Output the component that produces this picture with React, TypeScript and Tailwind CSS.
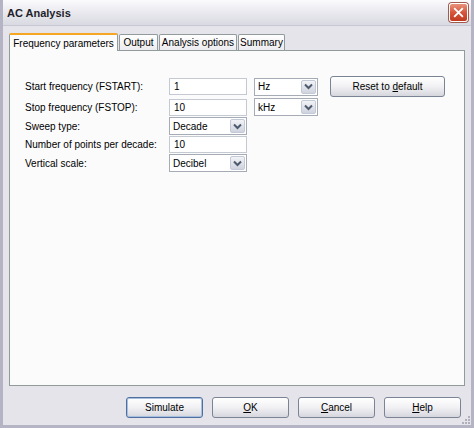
import React from "react";

const font = { fontFamily: 'Tahoma, "Liberation Sans", "DejaVu Sans", sans-serif' };

function Chevron() {
    return (
        <svg width="9" height="7" viewBox="0 0 9 7" aria-hidden="true">
            <path d="M1 1.5 L4.5 5 L8 1.5" fill="none" stroke="#4d5a6e" strokeWidth="2" />
        </svg>
    );
}

function Select({ value, width }: { value: string; width: string }) {
    return (
        <div className={`flex h-[18px] items-stretch border border-[#a5acb5] bg-white ${width}`}>
            <div className="flex flex-1 items-center pl-[3px] text-[10px] text-black">{value}</div>
            <div className="m-px flex w-[15px] items-center justify-center rounded-[2px] border border-[#c3c9d6] bg-gradient-to-b from-[#f2f3f7] to-[#cfd3de]">
                <Chevron />
            </div>
        </div>
    );
}

function Input({ value }: { value: string }) {
    return (
        <div className="flex h-[17px] w-[78px] items-center border border-[#c5cad2] bg-white pl-[4px] text-[10px] text-black">
            {value}
        </div>
    );
}

function Button({ children, focused = false, width = "w-[77px]" }: { children: React.ReactNode; focused?: boolean; width?: string }) {
    return (
        <button
            type="button"
            className={`flex h-[21px] items-center justify-center rounded-[3px] border ${
                focused ? "border-[#4f6f9f] shadow-[inset_0_0_0_1px_#a9bfe0]" : "border-[#7b8494]"
            } bg-gradient-to-b from-white via-[#f1f1f4] to-[#d6d7de] text-[10px] text-black ${width}`}
        >
            {children}
        </button>
    );
}

function Row({ label, children, className = "" }: { label: string; children: React.ReactNode; className?: string }) {
    return (
        <div className={`flex items-center ${className}`}>
            <div className="w-[144px] whitespace-nowrap text-[10px] text-black">{label}</div>
            {children}
        </div>
    );
}

function Tab({ label, width }: { label: string; width: string }) {
    return (
        <div className={`ml-px flex h-[16px] items-center justify-center whitespace-nowrap rounded-t-[2px] border-x border-t border-[#919b9c] bg-gradient-to-b from-white to-[#ececf0] text-[10px] text-black ${width}`}>
            {label}
        </div>
    );
}

export default function App() {
    return (
        <div style={font} className="flex h-[428px] w-[474px] flex-col border-x-[3px] border-b-[3px] border-[#b4b4c4] bg-[#e4e4ea]">
            {/* Title bar */}
            <div className="flex h-[26px] shrink-0 items-center justify-between border-b border-[#c8c8d4] bg-gradient-to-b from-[#fbfbfd] via-[#e9e9ef] to-[#d9d9e1] pl-[4px] pr-[3px]">
                <span className="pt-[2px] text-[11px] font-bold text-[#1f1f2a]">AC Analysis</span>
                <div className="flex h-[19px] w-[19px] items-center justify-center rounded-[3px] border border-white bg-gradient-to-b from-[#e8917c] via-[#d6553c] to-[#c0391f] shadow-[0_0_0_1px_#a05a4e]">
                    <svg width="11" height="11" viewBox="0 0 12 12" aria-hidden="true">
                        <path d="M2 2 L10 10 M10 2 L2 10" stroke="white" strokeWidth="2" strokeLinecap="square" />
                    </svg>
                </div>
            </div>

            {/* Tabs + panel */}
            <div className="flex flex-col px-[6px] pt-[7px]">
                <div className="flex items-end">
                    <div className="relative z-10 -mb-px flex h-[18px] w-[109px] items-center justify-center whitespace-nowrap rounded-t-[2px] border-x border-t-[2px] border-x-[#919b9c] border-t-[#f5a623] bg-[#fbfbfc] text-[10px] text-black">
                        Frequency parameters
                    </div>
                    <Tab label="Output" width="w-[39px]" />
                    <Tab label="Analysis options" width="w-[78px]" />
                    <Tab label="Summary" width="w-[47px]" />
                </div>
                <div className="flex h-[336px] flex-col border border-[#919b9c] bg-[#fbfbfc] pl-[15px] pt-[25px]">
                    <Row label="Start frequency (FSTART):">
                        <Input value="1" />
                        <div className="ml-[7px]">
                            <Select value="Hz" width="w-[64px]" />
                        </div>
                        <div className="ml-[12px]">
                            <Button width="w-[115px]">
                                <span>
                                    Reset to <u>d</u>efault
                                </span>
                            </Button>
                        </div>
                    </Row>
                    <Row label="Stop frequency (FSTOP):" className="mt-px">
                        <Input value="10" />
                        <div className="ml-[7px]">
                            <Select value="kHz" width="w-[64px]" />
                        </div>
                    </Row>
                    <Row label="Sweep type:" className="mt-px">
                        <Select value="Decade" width="w-[78px]" />
                    </Row>
                    <Row label="Number of points per decade:" className="mt-px">
                        <Input value="10" />
                    </Row>
                    <Row label="Vertical scale:" className="mt-px">
                        <Select value="Decibel" width="w-[78px]" />
                    </Row>
                </div>
            </div>

            {/* Footer buttons */}
            <div className="relative flex flex-1 items-start justify-end gap-[9px] pr-[10px] pt-[11px]">
                <Button focused>Simulate</Button>
                <Button>
                    <span>
                        <u>O</u>K
                    </span>
                </Button>
                <Button>
                    <span>
                        <u>C</u>ancel
                    </span>
                </Button>
                <Button>
                    <span>
                        <u>H</u>elp
                    </span>
                </Button>
                <svg className="absolute bottom-0 right-0" width="10" height="10" viewBox="0 0 10 10" aria-hidden="true">
                    <g fill="#b0b0bc">
                        <rect x="7" y="1" width="2" height="2" />
                        <rect x="4" y="4" width="2" height="2" />
                        <rect x="7" y="4" width="2" height="2" />
                        <rect x="1" y="7" width="2" height="2" />
                        <rect x="4" y="7" width="2" height="2" />
                        <rect x="7" y="7" width="2" height="2" />
                    </g>
                </svg>
            </div>
        </div>
    );
}
